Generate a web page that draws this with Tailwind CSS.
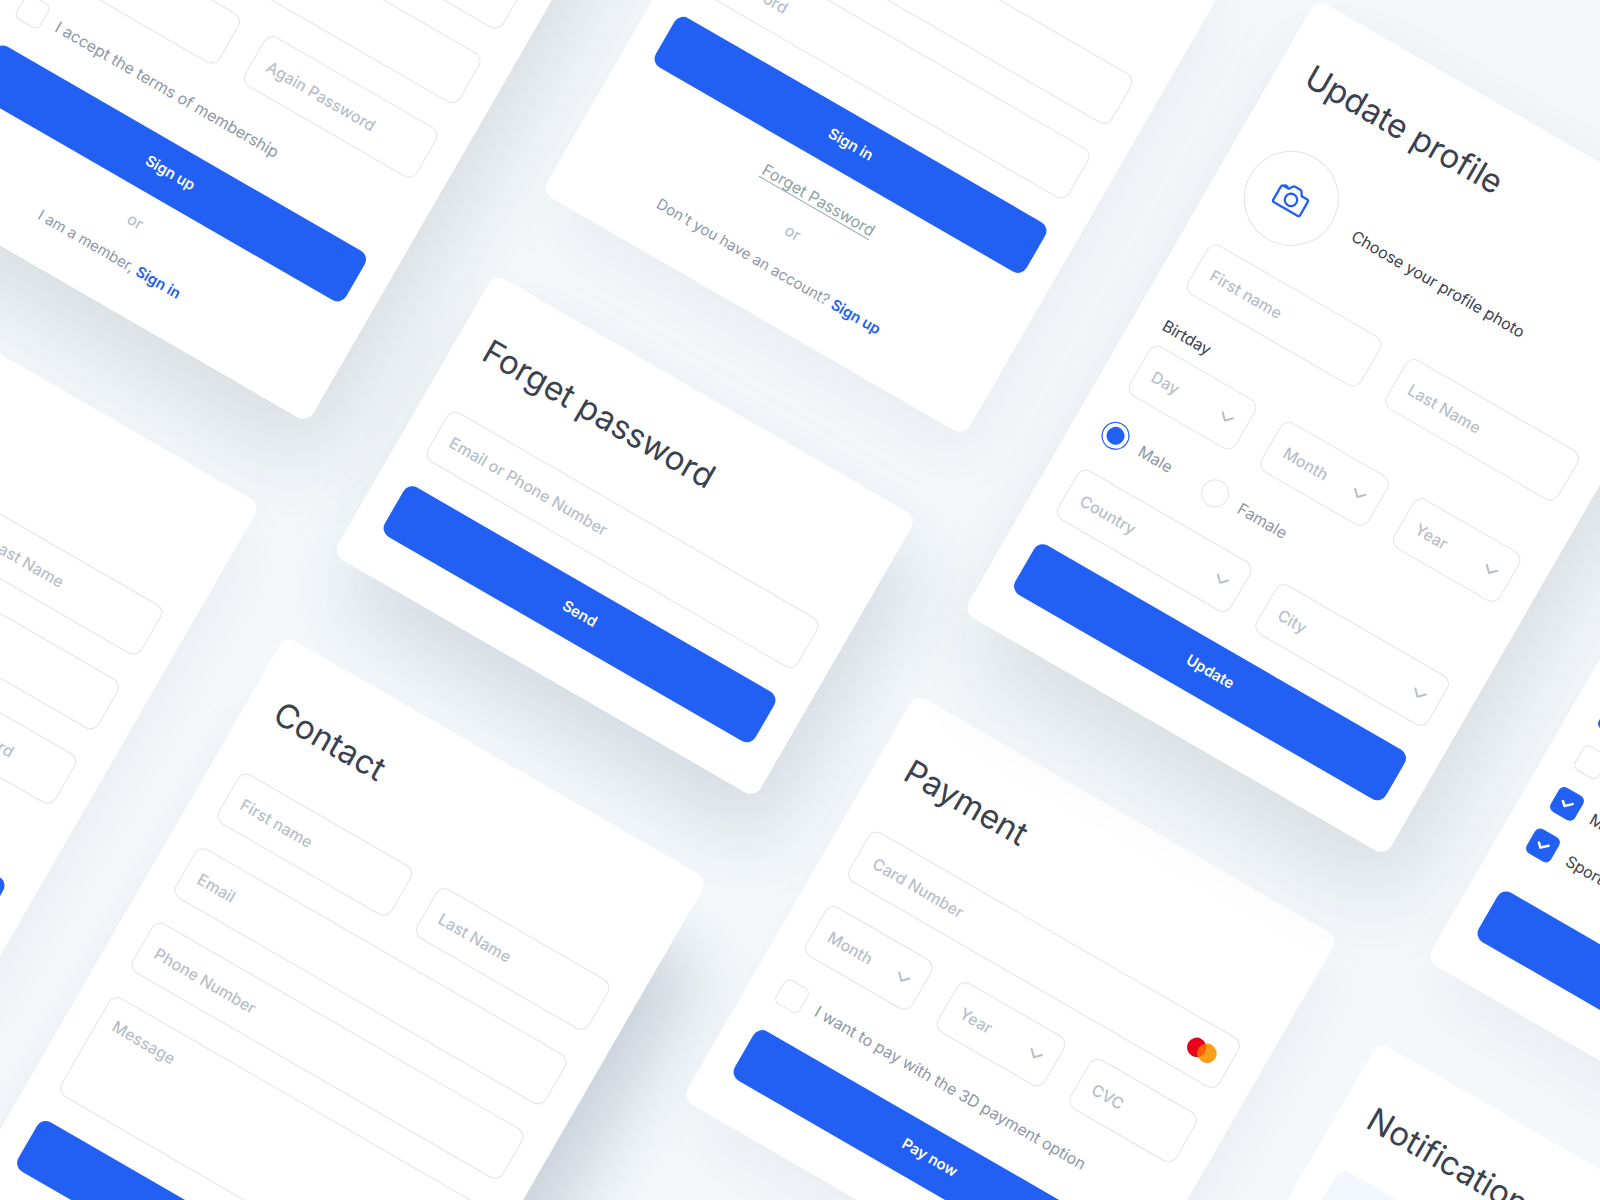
<!DOCTYPE html>
<html lang="en">
<head>
<meta charset="utf-8">
<meta name="viewport" content="width=device-width, initial-scale=1">
<title>Form cards</title>
<script src="https://cdn.jsdelivr.net/npm/@tailwindcss/browser@4"></script>
</head>
<body class="bg-[#f4f8fb] font-['Inter',sans-serif] text-base text-[#3a4150]">
<svg class="hidden" aria-hidden="true">
  <symbol id="chevron" viewBox="0 0 16 10"><path d="M2 2l6 6 6-6" fill="none" stroke="currentColor" stroke-width="2" stroke-linecap="round" stroke-linejoin="round"/></symbol>
  <symbol id="check" viewBox="0 0 14 10"><path d="M2 4.5l3.8 3.6L12 2.4" fill="none" stroke="currentColor" stroke-width="2.5" stroke-linecap="round" stroke-linejoin="round"/></symbol>
</svg>
<main class="relative h-screen overflow-hidden">
  <!-- Tilted board holding four columns of cards -->
  <div class="absolute left-[321px] top-[-576px] flex origin-top-left rotate-30 items-start gap-[87px]">

    <!-- Column 1 -->
    <div class="flex w-[488px] shrink-0 flex-col gap-[94px] pt-[243px]">
      <form class="rounded-xl bg-white px-[30px] pb-[27px] shadow-[30px_40px_90px_rgba(20,35,50,0.12)]">
        <h2 class="flex h-[138px] items-center text-[33px] leading-10">Sign up</h2>
        <div class="flex flex-col gap-[29px]">
          <div class="grid grid-cols-2 gap-[29px]">
            <input aria-label="First name" placeholder="First name" class="h-[57px] w-full rounded-[10px] border border-[#dfe4ec] px-[15px] font-medium placeholder:text-[#b9bfca]">
            <input aria-label="Last Name" placeholder="Last Name" class="h-[57px] w-full rounded-[10px] border border-[#dfe4ec] px-[15px] font-medium placeholder:text-[#b9bfca]">
          </div>
          <input type="email" aria-label="Email" placeholder="Email" class="h-[57px] w-full rounded-[10px] border border-[#dfe4ec] px-[15px] font-medium placeholder:text-[#b9bfca]">
          <div class="grid grid-cols-2 gap-[29px]">
            <input type="password" aria-label="Password" placeholder="Password" class="h-[57px] w-full rounded-[10px] border border-[#dfe4ec] px-[15px] font-medium placeholder:text-[#b9bfca]">
            <input type="password" aria-label="Again Password" placeholder="Again Password" class="h-[57px] w-full rounded-[10px] border border-[#dfe4ec] px-[15px] font-medium placeholder:text-[#b9bfca]">
          </div>
          <label class="flex h-7 items-center gap-[14px] text-[#8e97a6]">
            <input type="checkbox" class="size-7 appearance-none rounded-md border border-[#dfe4ec] bg-white">
            I accept the terms of membership
          </label>
          <button type="button" class="h-[57px] rounded-[10px] bg-[#2260f4] text-[15px] font-semibold text-white">Sign up</button>
        </div>
        <div class="mt-[10px] text-center leading-[41px]">
          <p class="pr-3 font-medium text-[#b9bfca]">or</p>
          <p class="pr-6 text-[15px] text-[#8e97a6]">I am a member, <a href="#" class="font-semibold text-[#2260f4]">Sign in</a></p>
        </div>
      </form>

      <form class="rounded-xl bg-white px-[30px] pb-[27px] shadow-[20px_30px_60px_rgba(20,35,50,0.04)]">
        <h2 class="flex h-[138px] items-center text-[33px] leading-10">Sign up</h2>
        <div class="flex flex-col gap-[29px]">
          <div class="grid grid-cols-2 gap-[29px]">
            <input aria-label="First name" placeholder="First name" class="h-[57px] w-full rounded-[10px] border border-[#dfe4ec] px-[15px] font-medium placeholder:text-[#b9bfca]">
            <input aria-label="Last Name" placeholder="Last Name" class="h-[57px] w-full rounded-[10px] border border-[#dfe4ec] px-[15px] font-medium placeholder:text-[#b9bfca]">
          </div>
          <input type="email" aria-label="Email" placeholder="Email" class="h-[57px] w-full rounded-[10px] border border-[#dfe4ec] px-[15px] font-medium placeholder:text-[#b9bfca]">
          <div class="grid grid-cols-2 gap-[29px]">
            <input type="password" aria-label="Password" placeholder="Password" class="h-[57px] w-full rounded-[10px] border border-[#dfe4ec] px-[15px] font-medium placeholder:text-[#b9bfca]">
            <input type="password" aria-label="Again Password" placeholder="Again Password" class="h-[57px] w-full rounded-[10px] border border-[#dfe4ec] px-[15px] font-medium placeholder:text-[#b9bfca]">
          </div>
          <label class="flex h-7 items-center gap-[14px] text-[#8e97a6]">
            <input type="checkbox" class="size-7 appearance-none rounded-md border border-[#dfe4ec] bg-white">
            I accept the terms
          </label>
          <button type="button" class="h-[57px] rounded-[10px] bg-[#2260f4] text-[15px] font-semibold text-white">Sign up</button>
        </div>
        <p class="mt-[10px] text-center text-[15px] leading-[41px] text-[#8e97a6]">or</p>
      </form>
    </div>

    <!-- Column 2 -->
    <div class="flex w-[488px] shrink-0 flex-col gap-[94px] pt-[21px]">
      <form class="rounded-xl bg-white px-[30px] pb-[29px] shadow-[20px_30px_60px_rgba(20,35,50,0.04)]">
        <h2 class="flex h-[138px] items-center text-[33px] leading-10">Sign in</h2>
        <div class="flex flex-col gap-[29px]">
          <input aria-label="Email or Phone Number" placeholder="Email or Phone Number" class="h-[57px] w-full rounded-[10px] border border-[#dfe4ec] px-[15px] font-medium placeholder:text-[#b9bfca]">
          <input type="password" aria-label="Password" placeholder="Password" class="h-[57px] w-full rounded-[10px] border border-[#dfe4ec] px-[15px] font-medium placeholder:text-[#b9bfca]">
          <button type="button" class="h-[57px] rounded-[10px] bg-[#2260f4] text-[15px] font-semibold text-white">Sign in</button>
        </div>
        <div class="mt-[15px] text-center leading-[41px]">
          <p><a href="#" class="text-[#8ca3a3] underline underline-offset-3">Forget Password</a></p>
          <p class="pr-3 font-medium text-[#b9bfca]">or</p>
          <p class="pr-5 text-[15px] text-[#8e97a6]">Don't you have an account? <a href="#" class="font-semibold text-[#2260f4]">Sign up</a></p>
        </div>
      </form>

      <form class="rounded-xl bg-white px-[30px] pb-[43px] shadow-[30px_40px_80px_rgba(20,50,80,0.14)]">
        <h2 class="flex h-[138px] items-center text-[33px] leading-10">Forget password</h2>
        <div class="flex flex-col gap-[29px]">
          <input aria-label="Email or Phone Number" placeholder="Email or Phone Number" class="h-[57px] w-full rounded-[10px] border border-[#dfe4ec] px-[15px] font-medium placeholder:text-[#b9bfca]">
          <button type="button" class="h-[57px] rounded-[10px] bg-[#2260f4] text-[15px] font-semibold text-white">Send</button>
        </div>
      </form>

      <form class="rounded-xl bg-white px-[30px] pb-11 shadow-[40px_80px_70px_rgba(20,40,80,0.19)]">
        <h2 class="flex h-[138px] items-center text-[33px] leading-10">Contact</h2>
        <div class="flex flex-col gap-[29px]">
          <div class="grid grid-cols-2 gap-[29px]">
            <input aria-label="First name" placeholder="First name" class="h-[57px] w-full rounded-[10px] border border-[#dfe4ec] px-[15px] font-medium placeholder:text-[#b9bfca]">
            <input aria-label="Last Name" placeholder="Last Name" class="h-[57px] w-full rounded-[10px] border border-[#dfe4ec] px-[15px] font-medium placeholder:text-[#b9bfca]">
          </div>
          <input type="email" aria-label="Email" placeholder="Email" class="h-[57px] w-full rounded-[10px] border border-[#dfe4ec] px-[15px] font-medium placeholder:text-[#b9bfca]">
          <input type="tel" aria-label="Phone Number" placeholder="Phone Number" class="h-[57px] w-full rounded-[10px] border border-[#dfe4ec] px-[15px] font-medium placeholder:text-[#b9bfca]">
          <textarea aria-label="Message" placeholder="Message" class="h-[114px] w-full resize-none rounded-[10px] border border-[#dfe4ec] px-[15px] pt-[14px] font-medium placeholder:text-[#b9bfca]"></textarea>
          <button type="button" class="h-[57px] rounded-[10px] bg-[#2260f4] text-[15px] font-semibold text-white">Send</button>
        </div>
      </form>
    </div>

    <!-- Column 3 -->
    <div class="flex w-[488px] shrink-0 flex-col gap-[94px]">
      <form class="relative z-10 rounded-xl bg-white px-[30px] pb-[43px] shadow-[30px_40px_90px_rgba(20,35,50,0.12)]">
        <h2 class="flex h-[138px] items-center text-[33px] leading-10">Update profile</h2>
        <div class="flex flex-col gap-[29px]">
          <div class="flex items-center gap-6">
            <button type="button" aria-label="Choose your profile photo" class="flex size-[95px] items-center justify-center rounded-full border border-[#dfe4ec] text-[#2260f4]">
              <svg class="h-8 w-9" viewBox="0 0 36 32" fill="none" stroke="currentColor" stroke-width="2.3" stroke-linecap="round" stroke-linejoin="round">
                <path d="M4.5 8.5H10.5L13 4.6Q13.7 3.5 15 3.5H21Q22.3 3.5 23 4.6L25.5 8.5H31.5Q33.5 8.5 33.5 10.5V25.5Q33.5 27.5 31.5 27.5H4.5Q2.5 27.5 2.5 25.5V10.5Q2.5 8.5 4.5 8.5Z"/>
                <path d="M5.5 7.2H8.5"/>
                <circle cx="18" cy="17" r="6.2"/>
              </svg>
            </button>
            <span>Choose your profile photo</span>
          </div>
          <div class="grid grid-cols-2 gap-[29px]">
            <input aria-label="First name" placeholder="First name" class="h-[57px] w-full rounded-[10px] border border-[#dfe4ec] px-[15px] font-medium placeholder:text-[#b9bfca]">
            <input aria-label="Last Name" placeholder="Last Name" class="h-[57px] w-full rounded-[10px] border border-[#dfe4ec] px-[15px] font-medium placeholder:text-[#b9bfca]">
          </div>
          <fieldset>
            <legend class="mb-[11px] leading-5">Birtday</legend>
            <div class="grid grid-cols-3 gap-[29px]">
              <div class="relative">
                <select aria-label="Day" class="h-[57px] w-full appearance-none rounded-[10px] border border-[#dfe4ec] px-[15px] font-medium text-[#b9bfca]"><option>Day</option></select>
                <svg class="pointer-events-none absolute right-[14px] top-6 h-[10px] w-4 text-[#b9bfca]"><use href="#chevron"/></svg>
              </div>
              <div class="relative">
                <select aria-label="Month" class="h-[57px] w-full appearance-none rounded-[10px] border border-[#dfe4ec] px-[15px] font-medium text-[#b9bfca]"><option>Month</option></select>
                <svg class="pointer-events-none absolute right-[14px] top-6 h-[10px] w-4 text-[#b9bfca]"><use href="#chevron"/></svg>
              </div>
              <div class="relative">
                <select aria-label="Year" class="h-[57px] w-full appearance-none rounded-[10px] border border-[#dfe4ec] px-[15px] font-medium text-[#b9bfca]"><option>Year</option></select>
                <svg class="pointer-events-none absolute right-[14px] top-6 h-[10px] w-4 text-[#b9bfca]"><use href="#chevron"/></svg>
              </div>
            </div>
          </fieldset>
          <div class="flex h-7 items-center gap-9 text-[#8e97a6]">
            <label class="flex items-center gap-[14px]">
              <input type="radio" name="gender" checked class="size-7 appearance-none rounded-full border border-[#dfe4ec] checked:border-[#2260f4] checked:bg-[#2260f4] checked:shadow-[inset_0_0_0_4px_white]">
              Male
            </label>
            <label class="flex items-center gap-[14px]">
              <input type="radio" name="gender" class="size-7 appearance-none rounded-full border border-[#dfe4ec] checked:border-[#2260f4] checked:bg-[#2260f4] checked:shadow-[inset_0_0_0_4px_white]">
              Famale
            </label>
          </div>
          <div class="grid grid-cols-2 gap-[29px]">
            <div class="relative">
              <select aria-label="Country" class="h-[57px] w-full appearance-none rounded-[10px] border border-[#dfe4ec] px-[15px] font-medium text-[#b9bfca]"><option>Country</option></select>
              <svg class="pointer-events-none absolute right-[14px] top-6 h-[10px] w-4 text-[#b9bfca]"><use href="#chevron"/></svg>
            </div>
            <div class="relative">
              <select aria-label="City" class="h-[57px] w-full appearance-none rounded-[10px] border border-[#dfe4ec] px-[15px] font-medium text-[#b9bfca]"><option>City</option></select>
              <svg class="pointer-events-none absolute right-[14px] top-6 h-[10px] w-4 text-[#b9bfca]"><use href="#chevron"/></svg>
            </div>
          </div>
          <button type="button" class="h-[57px] rounded-[10px] bg-[#2260f4] text-[15px] font-semibold text-white">Update</button>
        </div>
      </form>

      <form class="rounded-xl bg-white px-[30px] pb-11 shadow-[20px_30px_60px_rgba(20,35,50,0.04)]">
        <h2 class="flex h-[138px] items-center text-[33px] leading-10">Payment</h2>
        <div class="flex flex-col gap-[29px]">
          <div class="relative">
            <input aria-label="Card Number" placeholder="Card Number" class="h-[57px] w-full rounded-[10px] border border-[#dfe4ec] px-[17px] font-medium placeholder:text-[#b9bfca]">
            <svg class="absolute right-4 top-[18px] h-5 w-8" viewBox="0 0 32 20">
              <circle cx="10" cy="10" r="9.7" fill="#eb001b"/>
              <circle cx="22" cy="10" r="9.7" fill="#f79e1b"/>
              <path d="M16 2.4a9.7 9.7 0 0 1 0 15.2a9.7 9.7 0 0 1 0-15.2z" fill="#ff5f00"/>
            </svg>
          </div>
          <div class="grid grid-cols-3 gap-[29px]">
            <div class="relative">
              <select aria-label="Month" class="h-[57px] w-full appearance-none rounded-[10px] border border-[#dfe4ec] px-[15px] font-medium text-[#b9bfca]"><option>Month</option></select>
              <svg class="pointer-events-none absolute right-[14px] top-6 h-[10px] w-4 text-[#b9bfca]"><use href="#chevron"/></svg>
            </div>
            <div class="relative">
              <select aria-label="Year" class="h-[57px] w-full appearance-none rounded-[10px] border border-[#dfe4ec] px-[15px] font-medium text-[#b9bfca]"><option>Year</option></select>
              <svg class="pointer-events-none absolute right-[14px] top-6 h-[10px] w-4 text-[#b9bfca]"><use href="#chevron"/></svg>
            </div>
            <input aria-label="CVC" placeholder="CVC" class="h-[57px] w-full rounded-[10px] border border-[#dfe4ec] px-[15px] font-medium placeholder:text-[#b9bfca]">
          </div>
          <label class="flex h-7 items-center gap-[14px] text-[#8e97a6]">
            <input type="checkbox" class="size-7 appearance-none rounded-md border border-[#dfe4ec] bg-white">
            I want to pay with the 3D payment option
          </label>
          <button type="button" class="h-[57px] rounded-[10px] bg-[#2260f4] text-[15px] font-semibold text-white">Pay now</button>
        </div>
      </form>
    </div>

    <!-- Column 4 -->
    <div class="relative z-20 flex w-[488px] shrink-0 flex-col gap-[94px] pt-[324px]">
      <form class="rounded-xl bg-white px-[30px] pb-11 shadow-[20px_30px_60px_rgba(20,35,50,0.04)]">
        <h2 class="flex h-[138px] items-center text-[33px] leading-10">Interests</h2>
        <div class="flex flex-col gap-5">
          <label class="relative flex h-7 items-center gap-[14px]">
            <input type="checkbox" checked class="size-7 appearance-none rounded-md border border-[#dfe4ec] checked:border-[#2260f4] checked:bg-[#2260f4]">
            <svg class="absolute left-[7px] top-[9px] h-[10px] w-[14px] text-white"><use href="#check"/></svg>
            Travel
          </label>
          <label class="flex h-7 items-center gap-[14px]">
            <input type="checkbox" class="size-7 appearance-none rounded-md border border-[#dfe4ec]">
            Books
          </label>
          <label class="relative flex h-7 items-center gap-[14px]">
            <input type="checkbox" checked class="size-7 appearance-none rounded-md border border-[#dfe4ec] checked:border-[#2260f4] checked:bg-[#2260f4]">
            <svg class="absolute left-[7px] top-[9px] h-[10px] w-[14px] text-white"><use href="#check"/></svg>
            Music
          </label>
          <label class="relative flex h-7 items-center gap-[14px]">
            <input type="checkbox" checked class="size-7 appearance-none rounded-md border border-[#dfe4ec] checked:border-[#2260f4] checked:bg-[#2260f4]">
            <svg class="absolute left-[7px] top-[9px] h-[10px] w-[14px] text-white"><use href="#check"/></svg>
            Sport
          </label>
        </div>
        <button type="button" class="mt-[43px] h-[57px] w-full rounded-[10px] bg-[#2260f4] text-[15px] font-semibold text-white">Save</button>
      </form>

      <section class="rounded-xl bg-white px-[30px] pb-11">
        <h2 class="flex h-[128px] items-center pt-[10px] text-[33px] leading-10">Notification</h2>
        <div class="h-[120px] rounded-[10px] bg-[#f1f6ff]"></div>
      </section>
    </div>
  </div>
</main>
</body>
</html>
